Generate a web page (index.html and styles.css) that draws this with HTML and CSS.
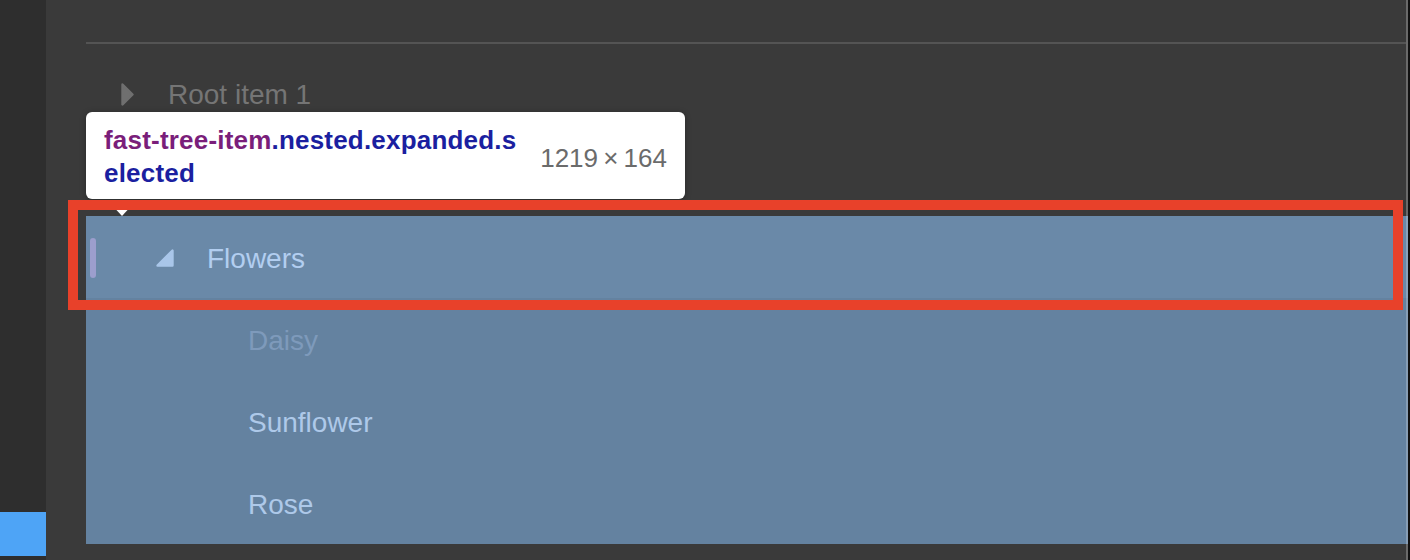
FILE: index.html
```html
<!DOCTYPE html>
<html lang="en">
<head>
<meta charset="utf-8">
<title>Tree view inspector</title>
<link rel="stylesheet" href="styles.css">
</head>
<body>
<div class="page">
  <aside class="sidebar">
    <div class="sidebar-spacer"></div>
    <div class="sidebar-tab"></div>
  </aside>
  <main class="main">
    <div class="divider"></div>
    <div class="tree">
      <div class="row level-1">
        <span class="chev-slot chev-slot-root">
          <svg class="chev" width="13" height="23" viewBox="0 0 13 23"><path d="M1.5 1.5 L11.5 11.5 L1.5 21.5 Z" fill="#6f6f6f" stroke="#6f6f6f" stroke-width="2.4" stroke-linejoin="round"/></svg>
        </span>
        <span class="label label-root">Root item 1</span>
      </div>
      <div class="row row-hidden"></div>
      <div class="selected-group">
        <div class="row row-selected level-2">
          <span class="focus-bar"></span>
          <span class="chev-slot chev-slot-nested">
            <svg class="chev" width="18" height="18" viewBox="0 0 18 18"><path d="M16.5 1.5 L16.5 16.5 L1.5 16.5 Z" fill="#a9c6e9" stroke="#a9c6e9" stroke-width="2.4" stroke-linejoin="round"/></svg>
          </span>
          <span class="label label-selected">Flowers</span>
        </div>
        <div class="row level-3"><span class="label label-disabled">Daisy</span></div>
        <div class="row level-3"><span class="label label-child">Sunflower</span></div>
        <div class="row level-3"><span class="label label-child">Rose</span></div>
      </div>
    </div>
  </main>
  <div class="edge"></div>

  <div class="tooltip">
    <div class="tooltip-name"><span class="tag">fast-tree-item</span><span class="cls">.nested.expanded.s<br>elected</span></div>
    <div class="tooltip-dims">1219&#8201;×&#8201;164</div>
  </div>
  <div class="tooltip-arrow"></div>
  <div class="hover-box"></div>
</div>
</body>
</html>
```
FILE: styles.css
```css
html, body {
  margin: 0;
  padding: 0;
  background: #3a3a3a;
}
body {
  font-family: "Liberation Sans", Arial, sans-serif;
  width: 1410px;
  height: 560px;
  overflow: hidden;
}
.page {
  position: relative;
  display: flex;
  width: 1410px;
  height: 560px;
}
.sidebar {
  width: 46px;
  flex: none;
  background: #2e2e2e;
  display: flex;
  flex-direction: column;
}
.sidebar-spacer {
  flex: 1;
}
.sidebar-tab {
  height: 44px;
  margin-bottom: 4px;
  background: #4ea4f6;
}
.main {
  flex: 1;
  background: #3a3a3a;
  padding: 42px 0 0 40px;
  box-shadow: inset -2px 0 0 #6a6a6a;
}
.divider {
  height: 2px;
  background: #545454;
  margin-right: 2px;
}
.tree {
  margin-top: 8px;
}
.row {
  height: 82px;
  display: flex;
  align-items: center;
  box-sizing: border-box;
}
.level-1 {
  padding-left: 36px;
}
.level-2 {
  padding-left: 4px;
}
.level-3 {
  padding-left: 162px;
}
.chev-slot {
  display: flex;
  align-items: center;
}
.chev-slot-root {
  width: 47px;
  margin-left: -1px;
  margin-top: 2px;
}
.chev-slot-nested {
  width: 51px;
  margin-left: 60px;
  margin-top: 2px;
}
.chev {
  display: block;
}
.label {
  font-size: 28px;
  line-height: 28px;
  white-space: nowrap;
  margin-top: 4px;
}
.label-root {
  color: #757575;
}
.selected-group {
  background: #6482a0;
  box-shadow: inset -2px 0 0 rgba(255, 255, 255, 0.22);
}
.row-selected {
  background: #6a89a8;
  box-shadow: inset -2px 0 0 rgba(255, 255, 255, 0.22);
}
.focus-bar {
  width: 6px;
  height: 40px;
  border-radius: 3px;
  background: #9c9ecd;
  margin-top: 2px;
}
.label-selected {
  color: #b2cef0;
}
.label-child {
  color: #aec9e9;
}
.label-disabled {
  color: #7e9abb;
}
.edge {
  width: 2px;
  flex: none;
  background: #111111;
}
.tooltip {
  position: absolute;
  left: 86px;
  top: 112px;
  width: 599px;
  height: 87px;
  box-sizing: border-box;
  padding: 12px 18px 9px 18px;
  background: #ffffff;
  border-radius: 6px;
  box-shadow: 0 1px 6px rgba(0, 0, 0, 0.3);
  display: flex;
  justify-content: space-between;
  align-items: center;
  z-index: 2;
}
.tooltip-name {
  font-weight: bold;
  font-size: 26px;
  line-height: 33px;
  letter-spacing: 0.2px;
}
.tag {
  color: #7a1e7a;
}
.cls {
  color: #1b1fa0;
}
.tooltip-dims {
  font-size: 26px;
  line-height: 33px;
  color: #6b6b6b;
  white-space: nowrap;
  margin-top: 2px;
}
.tooltip-arrow {
  position: absolute;
  left: 110px;
  top: 203px;
  width: 0;
  height: 0;
  border-left: 12px solid transparent;
  border-right: 12px solid transparent;
  border-top: 13px solid #ffffff;
  z-index: 2;
}
.hover-box {
  position: absolute;
  left: 68px;
  top: 200px;
  width: 1335px;
  height: 110px;
  box-sizing: border-box;
  border: 10px solid #e8412a;
  z-index: 3;
}
```
